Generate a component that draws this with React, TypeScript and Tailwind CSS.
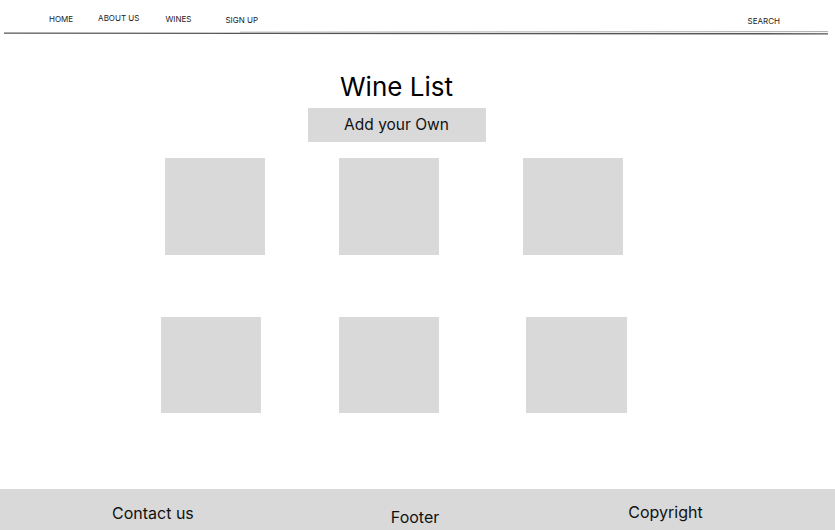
export default function App() {
  const font = { fontFamily: 'Inter, "Noto Sans", sans-serif' };
  return (
    <div className="w-[835px] h-[530px] bg-white flex flex-col text-black overflow-hidden" style={font}>
      {/* Nav */}
      <header className="relative h-[38px]">
        <nav className="flex items-start text-[8px] leading-none text-[#222] pt-[14px]">
          <a className="ml-[49px] mt-[1px]">HOME</a>
          <a className="ml-[25px]">ABOUT US</a>
          <a className="ml-[26px] mt-[1px]">WINES</a>
          <a className="ml-[34px] mt-[2px]">SIGN UP</a>
          <a className="ml-auto mr-[55px] mt-[3px]">SEARCH</a>
        </nav>
        <svg className="absolute left-0 top-[29px]" width="835" height="8" viewBox="0 0 835 8">
          <line x1="4" y1="4.2" x2="828" y2="4.8" stroke="#555" strokeWidth="1.3" />
          <line x1="240" y1="3.2" x2="828" y2="2.6" stroke="#aaa" strokeWidth="1" />
        </svg>
      </header>

      {/* Main */}
      <main className="flex flex-col">
        <div className="flex flex-col items-center mr-[42px]">
          <h1 className="text-[26px] leading-none mt-[36px]">Wine List</h1>
          <button className="mt-[8px] w-[178px] h-[34px] bg-[#d9d9d9] text-[15.5px] text-[#111]">Add your Own</button>
        </div>

        <div className="flex mt-[16px]">
          <div className="ml-[165px] w-[100px] h-[97px] bg-[#d9d9d9]" />
          <div className="ml-[74px] w-[100px] h-[97px] bg-[#d9d9d9]" />
          <div className="ml-[84px] w-[100px] h-[97px] bg-[#d9d9d9]" />
        </div>
        <div className="flex mt-[62px]">
          <div className="ml-[161px] w-[100px] h-[96px] bg-[#d9d9d9]" />
          <div className="ml-[78px] w-[100px] h-[96px] bg-[#d9d9d9]" />
          <div className="ml-[87px] w-[101px] h-[96px] bg-[#d9d9d9]" />
        </div>
      </main>

      {/* Footer */}
      <footer className="mt-auto h-[41px] bg-[#d9d9d9] flex items-start text-[16px] leading-none text-[#111]">
        <span className="ml-[112px] mt-[16px]">Contact us</span>
        <span className="ml-[197px] mt-[20px]">Footer</span>
        <span className="ml-[189px] mt-[15px]">Copyright</span>
      </footer>
    </div>
  );
}
